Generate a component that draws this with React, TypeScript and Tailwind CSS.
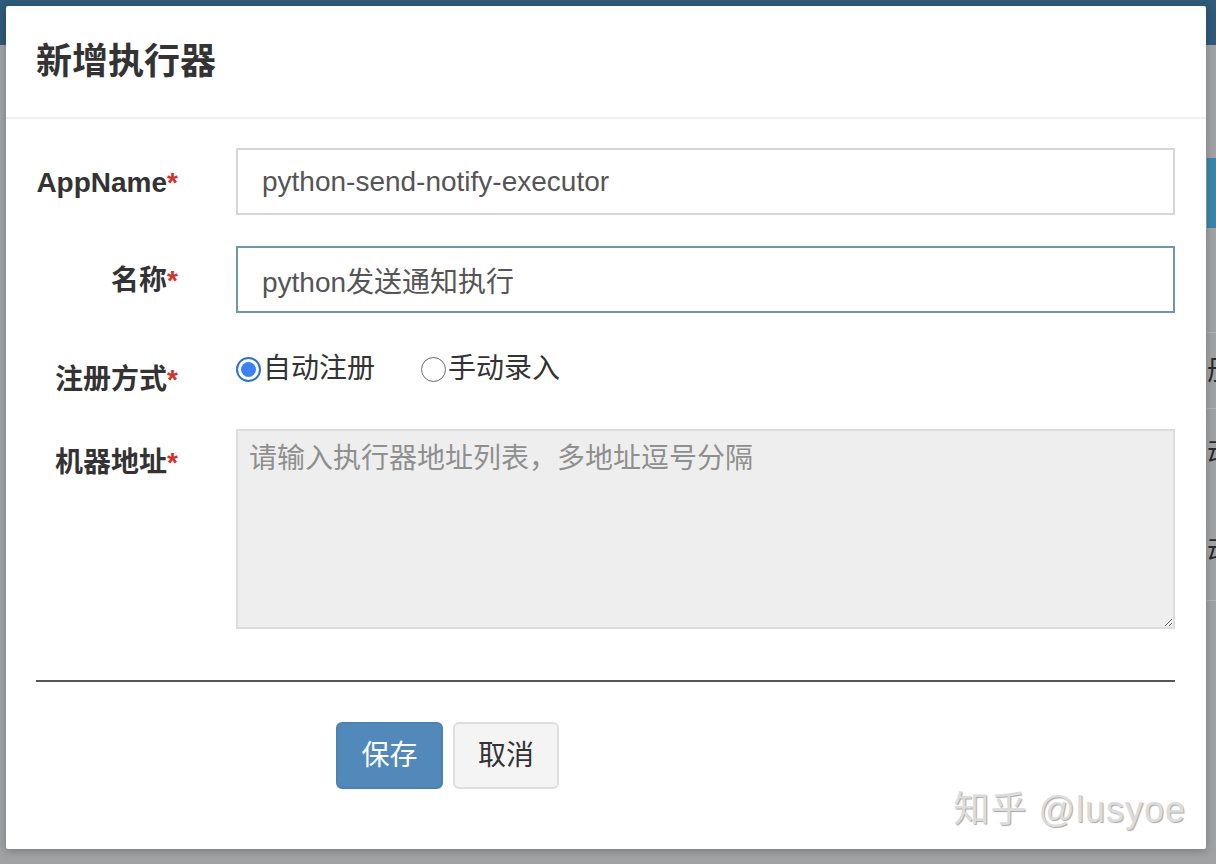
import React from "react";

const cjk = "font-['Liberation_Sans','Noto_Sans_CJK_SC',sans-serif]";

function Label({ text, className = "" }: { text: string; className?: string }) {
  return (
    <div className={`w-[172px] shrink-0 text-right text-[28px] font-bold text-[#333] ${className}`}>
      {text}
      <span className="text-[#d0342c]">*</span>
    </div>
  );
}

function Radio({ checked, text }: { checked?: boolean; text: string }) {
  return (
    <label className="flex items-center gap-[2px] text-[28px] text-[#333]">
      {checked ? (
        <span className="flex h-[25px] w-[25px] items-center justify-center rounded-full border-2 border-[#2a6fdb] bg-white">
          <span className="h-[15px] w-[15px] rounded-full bg-[#3b82f6]" />
        </span>
      ) : (
        <span className="h-[25px] w-[25px] rounded-full border-[1.5px] border-[#6b6b6b] bg-white" />
      )}
      {text}
    </label>
  );
}

export default function App() {
  return (
    <div className={`relative h-[864px] w-[1216px] overflow-hidden bg-[#a1a2a3] ${cjk}`}>
      {/* page behind the overlay */}
      <div className="h-[45px] bg-[#2f5a79]" />
      <div className="flex">
        <div className="w-[1207px] shrink-0" />
        <div className="flex w-[200px] flex-col text-[28px] text-[#2b2b2b]">
          <div className="mt-[113px] h-[70px] bg-[#3a86a9]" />
          <div className="mt-[104px] h-[76px] border-t border-[#b3b4b5] leading-[76px] whitespace-nowrap">册方式</div>
          <div className="h-[96px] border-t border-[#b3b4b5] leading-[90px] whitespace-nowrap">动注册</div>
          <div className="h-[96px] leading-[96px] whitespace-nowrap">动注册</div>
          <div className="border-t border-[#b3b4b5]" />
        </div>
      </div>

      {/* modal */}
      <div className="absolute left-[6px] top-[6px] flex h-[843px] w-[1200px] flex-col rounded-[2px] bg-white shadow-[0_2px_8px_rgba(0,0,0,0.25)]">
        <div className="flex h-[113px] shrink-0 items-center border-b-2 border-[#f0f0f0] px-[30px]">
          <h4 className="text-[36px] font-bold text-[#333]">新增执行器</h4>
        </div>

        <div className="flex flex-col pr-[31px]">
          <div className="mt-[29px] flex items-center">
            <Label text="AppName" className="pt-[3px]" />
            <input
              readOnly
              value="python-send-notify-executor"
              className="ml-[58px] h-[67px] flex-1 border-2 border-[#d6d6d6] px-[24px] text-[28px] text-[#555] outline-none"
            />
          </div>

          <div className="mt-[31px] flex items-center">
            <Label text="名称" className="pt-[3px]" />
            <input
              readOnly
              value="python发送通知执行"
              className="ml-[58px] h-[67px] flex-1 border-2 border-[#6e98aa] px-[24px] text-[28px] text-[#555] outline-none"
            />
          </div>

          <div className="mt-[32px] flex items-start">
            <Label text="注册方式" className="mt-[15px] leading-[40px]" />
            <div className="ml-[58px] flex h-[48px] items-center gap-[46px]">
              <Radio checked text="自动注册" />
              <Radio text="手动录入" />
            </div>
          </div>

          <div className="mt-[29px] flex items-start">
            <Label text="机器地址" className="mt-[14px] leading-[40px]" />
            <textarea
              readOnly
              placeholder="请输入执行器地址列表，多地址逗号分隔"
              className="ml-[58px] h-[200px] flex-1 border-2 border-[#dddddd] bg-[#eeeeee] px-[11px] py-[10px] text-[28px] leading-[36px] text-[#555] outline-none placeholder:text-[#8f8f8f]"
            />
          </div>
        </div>

        <hr className="ml-[30px] mr-[31px] mt-[51px] border-t-2 border-[#555]" />

        <div className="ml-[330px] mt-[40px] flex gap-[10px]">
          <button className="h-[67px] w-[107px] rounded-[6px] border-2 border-[#4a82b1] bg-[#5189ba] text-[28px] text-white">
            保存
          </button>
          <button className="h-[67px] w-[106px] rounded-[6px] border-2 border-[#dedede] bg-[#f4f4f4] text-[28px] text-[#333]">
            取消
          </button>
        </div>

        <div className="absolute right-[20px] top-[783px] text-[36px] leading-[42px] tracking-[1px] text-[#dcdcdc] [text-shadow:1px_1px_1px_rgba(0,0,0,0.35)]">
          知乎 @lusyoe
        </div>
      </div>
    </div>
  );
}
